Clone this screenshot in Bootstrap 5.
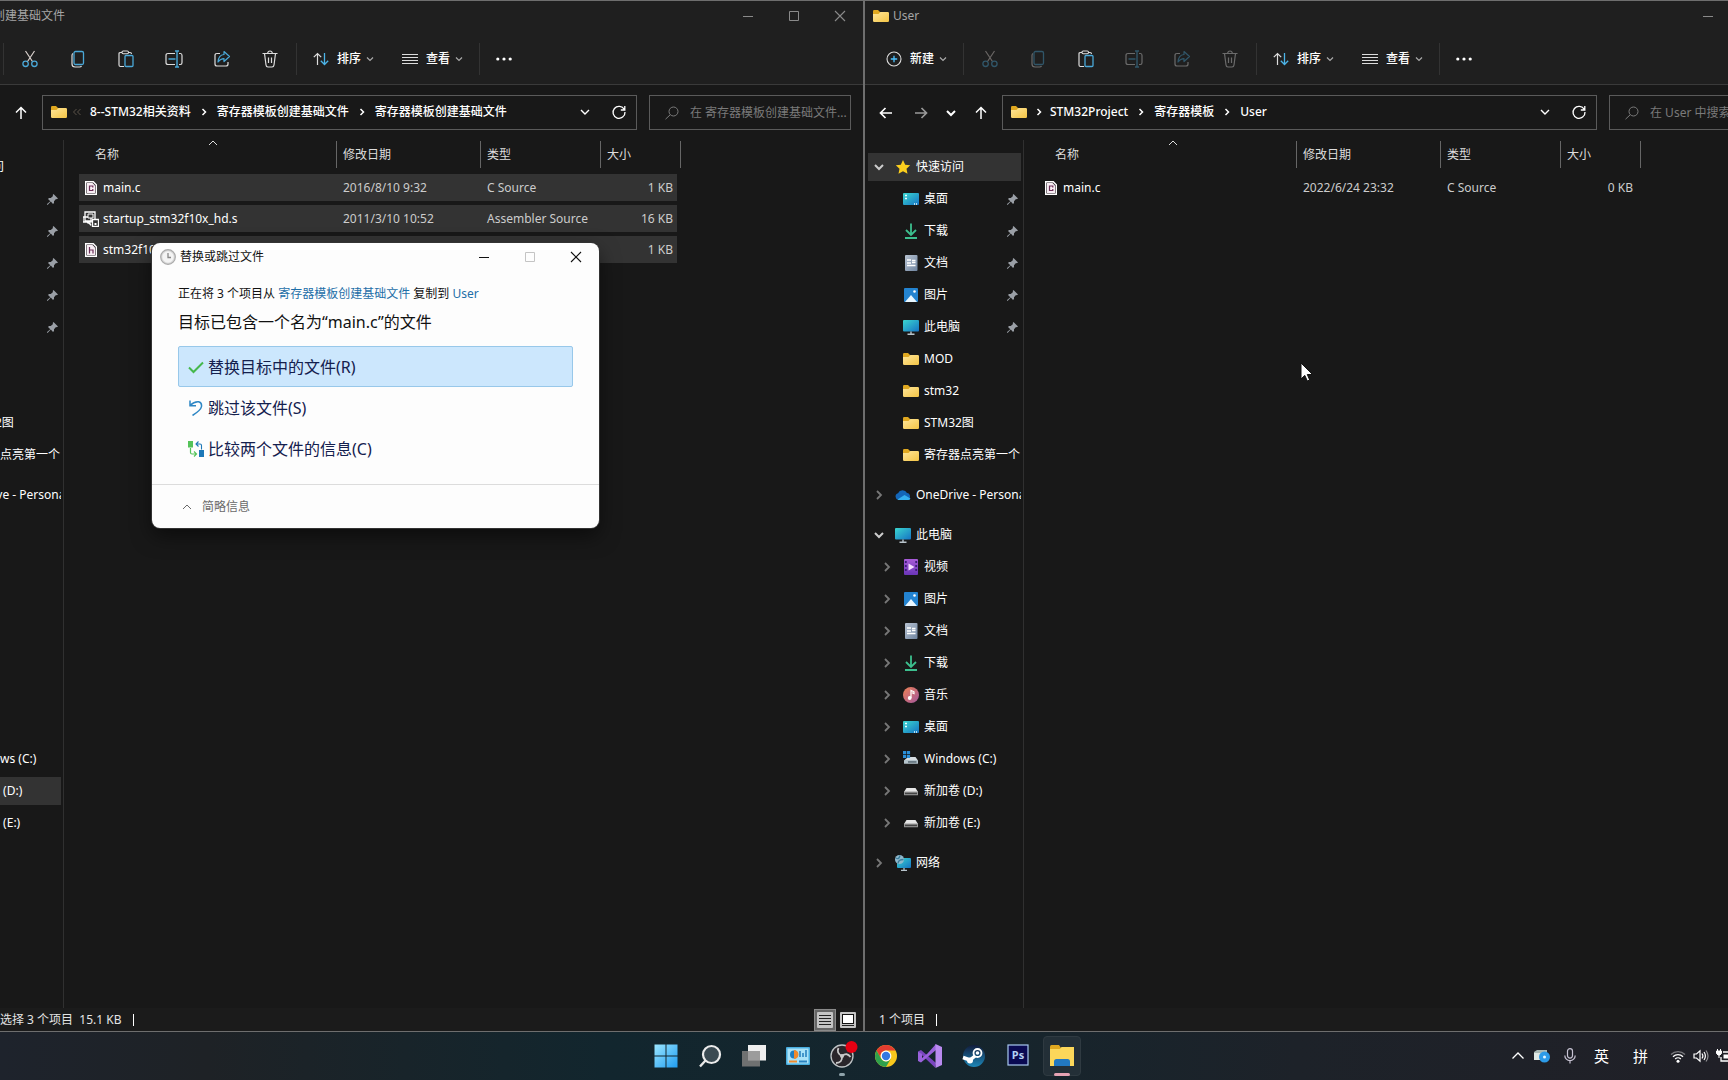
<!DOCTYPE html>
<html lang="zh-CN">
<head>
<meta charset="utf-8">
<meta name="viewport" content="width=device-width, initial-scale=1">
<title>User</title>
<link href="https://cdn.jsdelivr.net/npm/bootstrap@5.3.0/dist/css/bootstrap.min.css" rel="stylesheet">
<style>
body{font-family:"Noto Sans","Noto Sans CJK SC",sans-serif;font-size:12px;line-height:16px;background:#181818;color:#fff}
button,input{font:inherit;color:inherit}
button{background:none;border:0;padding:0}
a{color:inherit;text-decoration:none}
svg{display:block;flex:none}
.ic{width:16px;height:16px}
.cv{width:8px;height:8px}
.pane{width:50%;overflow:hidden;position:relative;border-top:1px solid #6e6e6e;border-bottom:1px solid #6e6e6e}
.pane::after{content:"";position:absolute;top:0;bottom:0;width:1px;background:#6e6e6e}
.pane-l::after{right:0}
.pane-r::after{left:0}
.win{width:calc(100% + 95px)}
.pane-l{background:linear-gradient(#1f1f1f 84px,#181818 84px)}
.pane-l .win{margin-left:-96px}
.titlebar{height:30px;background:#1f1f1f;color:#a5a5a5;padding-left:9px}
.titlebar button{width:46px;height:30px;color:#8a8a8a}
.tools{height:54px;background:#1f1f1f;border-bottom:1px solid #3a3a3a;padding:2px 0 0 22px}
.tools .lab{gap:8px;font-weight:500}
.tools .lab .cv{margin-left:-3px;color:#aaa}
.tools .lab.new{width:61px}
.tools .lab.view{margin-left:28px}
.tools .sq{width:48px;height:32px}
.tools .sq svg{width:18px;height:18px}
.tools .sq:disabled{opacity:.4}
.vsep{width:1px;height:32px;background:#333;margin:0 16px}
.vsep.s1{margin-right:2px}
.vsep.s2{margin-left:2px}
.navrow{padding:10px 12px 0 4px}
.navrow .nb{height:35px;width:34px}
.navrow .nb.bk{width:36px}
.navrow .nb.hs{width:26px}
.navrow .nb:disabled{color:#999}
.abox{height:35px;border:1px solid #5a5a5a;padding:0 0 2px 8px;margin:0 12px 0 4px}
.abox a{white-space:nowrap;font-weight:500}
.abox .arr{width:26px}
.abox .arr.first{width:23px}
.sbox{height:35px;width:202px;border:1px solid #5a5a5a;padding-left:14px;color:#7a7a7a}
.sbox input{background:none;border:0;outline:0;padding:0;margin-left:10px;min-width:0;flex:1}
.sbox input::placeholder{color:#7a7a7a;opacity:1}
.side{width:160px;padding:21px 3px 0 4px;margin:0}
.sidewrap{position:relative}
.sidewrap::after{content:"";position:absolute;right:0;top:10px;bottom:0;width:1px;background:#303030}
.side li{height:28px;margin:2px 0 4px;overflow:hidden;white-space:nowrap;display:flex;align-items:center}
.side li.sub{padding-left:8px}
.side li.top{margin-top:12px}
.side li.cur{background:#333}
.side .tw{width:22px;display:flex;justify-content:center;margin-right:5px;flex:none;color:#777}
.side .tw.open{color:#ccc}
.side a{margin-left:5px}
.side .pin{width:11px;height:11px;margin-left:auto;margin-right:3px;color:#9a9fa6}
.files{width:602px;margin:7px 0 0 15px;border-collapse:separate;border-spacing:0 4px;table-layout:fixed}
.files th{height:29px;padding:0;font-weight:400;vertical-align:top;color:#ddd;position:relative}
.files th div{height:27px;line-height:27px;padding-left:6px;border-right:1px solid #666}
.files th:first-child div{padding-left:16px}
.files th svg{position:absolute;left:50%;top:-1px}
.files td{height:27px;padding:0 0 0 6px;color:#ccc;white-space:nowrap}
.files td:first-child{padding-left:4px;color:#fff}
.files td:last-child{text-align:right;padding-right:4px;border-right:4px solid transparent;background-clip:padding-box}
.files .on td{background-color:#333}
.files .c1{width:258px}.files .c2{width:144px}.files .c3{width:120px}.files .c4{width:80px}
.status{height:23px;background:#1b1b1b;padding-left:15px;padding-right:7px;color:#e4e4e4}
.status i{width:1px;height:12px;background:#fff;margin:0 11px}
.status .vb{width:22px;height:22px;display:flex;align-items:center;justify-content:center}
.status .vb.on{background:#666;outline:1px solid #8a8a8a;outline-offset:-1px}
.status .vb.big{width:16px}
.dlg{position:absolute;left:152px;top:243px;width:447px;background:#fdfdfd;color:#111;border-radius:8px;box-shadow:0 0 0 1px #333,0 8px 20px rgba(0,0,0,.5);overflow:hidden}
.dlg .dt{height:28px;padding-left:8px}
.dlg .dt button{width:46px;height:28px}
.dlg .dt button:disabled{color:#c4c4c4}
.dlg .db{padding:15px 26px 15px}
.dlg .db a{color:#1e6fa8}
.dlg h1{font-size:16px;line-height:24px;font-weight:400;margin:8px 0 12px}
.dlg .opt{height:41px;width:100%;font-size:16px;color:#14204e;border:1px solid transparent;border-radius:2px;padding-left:9px;gap:4px}
.dlg .opt.on{background:#cce7fd;border-color:#98c8ea}
.dlg .df{border-top:1px solid #dcdcdc;height:44px;padding-left:30px;color:#6a6a6a;gap:10px}
.taskbar{height:48px;background:linear-gradient(90deg,#1e232c 0,#1e2226 12%,#12262e 35%,#15252d 55%,#1d2229 75%,#202027 100%);position:relative}
.taskbar .tk{width:44px;height:48px;display:flex;align-items:center;justify-content:center;position:relative}
.taskbar .tk svg{width:24px;height:24px}
.taskbar .tk.act::before{content:"";position:absolute;inset:4px 3px;background:#232f37;border:1px solid #2f3a41;border-radius:4px}
.taskbar .tk.act svg{position:relative}
.tk .dot{position:absolute;bottom:4px;width:6px;height:3px;border-radius:2px;background:#8fa3aa}
.tk.act .dot{width:16px;background:#e6a3b4}
.tray{position:absolute;right:-10px;top:0;height:48px;font-size:15px}
.tray .ime{width:39px}
.tray .mic{margin:0 4px 0 12px}
.tray .sys{margin-left:10px;gap:7px}
.cursor{position:absolute;left:1300px;top:362px;width:14px;height:21px}
</style>
</head>
<body class="vh-100 d-flex flex-column overflow-hidden position-relative">
<svg width="0" height="0" class="position-absolute" aria-hidden="true">
<defs>
<linearGradient id="gf" x1="0" y1="0" x2="1" y2="1"><stop offset="0" stop-color="#ffe69a"/><stop offset="1" stop-color="#f3c445"/></linearGradient>
<linearGradient id="gm" x1="0" y1="0" x2="1" y2="1"><stop offset="0" stop-color="#3ad6cf"/><stop offset="1" stop-color="#1673c4"/></linearGradient>
<linearGradient id="gw" x1="0" y1="0" x2="1" y2="1"><stop offset="0" stop-color="#9be6ff"/><stop offset="1" stop-color="#1f9cf0"/></linearGradient>
<linearGradient id="gd" x1="0" y1="0" x2="1" y2="1"><stop offset="0" stop-color="#b9c4d2"/><stop offset="1" stop-color="#6f84a0"/></linearGradient>
<linearGradient id="gv" x1="0" y1="0" x2="0" y2="1"><stop offset="0" stop-color="#a85bd8"/><stop offset="1" stop-color="#6a35b8"/></linearGradient>
<linearGradient id="gu" x1="0" y1="0" x2="1" y2="1"><stop offset="0" stop-color="#ee8153"/><stop offset="1" stop-color="#a3579f"/></linearGradient>
<linearGradient id="gs" x1="0" y1="0" x2="0" y2="1"><stop offset="0" stop-color="#121c3c"/><stop offset="1" stop-color="#1d87b8"/></linearGradient>
</defs>
<symbol id="folder" viewBox="0 0 16 16"><path d="M0 3.200Q0 2 1.200 2H5l2 2v3H0z" fill="#e0a820"/><path d="M0 6h5.500l1.800-2h7.500Q16 4 16 5.200v7.600Q16 14 14.800 14H1.200Q0 14 0 12.800z" fill="url(#gf)"/></symbol>
<symbol id="down" viewBox="0 0 8 8"><path d="M1 2.500 4 5.500l3-3" fill="none" stroke="currentColor" stroke-width="1.200"/></symbol>
<symbol id="down2" viewBox="0 0 16 16"><path d="M4 6l4 4 4-4" fill="none" stroke="currentColor" stroke-width="1.400"/></symbol>
<symbol id="down3" viewBox="0 0 16 16"><path d="M4 6l4 4 4-4" fill="none" stroke="currentColor" stroke-width="2"/></symbol>
<symbol id="right2" viewBox="0 0 16 16"><path d="M6 4l4 4-4 4" fill="none" stroke="currentColor" stroke-width="1.800"/></symbol>
<symbol id="crumb" viewBox="0 0 8 8"><path d="M2.500 1 5.500 4l-3 3" fill="none" stroke="currentColor" stroke-width="1.500"/></symbol>
<symbol id="up" viewBox="0 0 16 16"><path d="M8 14V2.500M3 7.500l5-5 5 5" fill="none" stroke="currentColor" stroke-width="1.500"/></symbol>
<symbol id="back" viewBox="0 0 16 16"><path d="M14 8H2.500M7.500 3l-5 5 5 5" fill="none" stroke="currentColor" stroke-width="1.700"/></symbol>
<symbol id="fwd" viewBox="0 0 16 16"><path d="M2 8h11.500M8.500 3l5 5-5 5" fill="none" stroke="currentColor" stroke-width="1.700"/></symbol>
<symbol id="refresh" viewBox="0 0 16 16"><path d="M13.300 5.500A6 6 0 1 0 14 8M13.800 2v4H9.800" fill="none" stroke="currentColor" stroke-width="1.300"/></symbol>
<symbol id="mag" viewBox="0 0 16 16"><path d="M6.300 9.700 1.500 14.200" stroke="currentColor"/><circle cx="9.500" cy="6.500" r="4.500" fill="none" stroke="currentColor"/></symbol>
<symbol id="min" viewBox="0 0 12 12"><path d="M1 6.500h10" stroke="currentColor"/></symbol>
<symbol id="max" viewBox="0 0 12 12"><path d="M1.500 1.500h9v9h-9z" fill="none" stroke="currentColor"/></symbol>
<symbol id="x" viewBox="0 0 12 12"><path d="M1 1l10 10M11 1 1 11" stroke="currentColor" stroke-width="1.100"/></symbol>
<symbol id="plus" viewBox="0 0 16 16"><circle cx="8" cy="8" r="7" fill="none" stroke="#ddd" stroke-width="1.100"/><path d="M8 4.800v6.400M4.800 8h6.400" stroke="#4cc2ff" stroke-width="1.300"/></symbol>
<symbol id="cut" viewBox="0 0 18 18"><path d="M4.500 1 11.800 12M13.500 1 6.200 12" stroke="#d8d0cc" stroke-width="1.200"/><g fill="none" stroke="#4aa8d8" stroke-width="1.300"><circle cx="4.600" cy="13.800" r="2.700"/><circle cx="13.400" cy="13.800" r="2.700"/></g></symbol>
<symbol id="copy" viewBox="0 0 18 18"><path d="M4 3.500Q3 4 3 5.500V14q0 3 3 3h4.500q1.500 0 2-1" fill="none" stroke="#ddd" stroke-width="1.200"/><rect x="5" y="1.500" width="9.500" height="13" rx="1.500" fill="none" stroke="#4aa8d8" stroke-width="1.300"/></symbol>
<symbol id="paste" viewBox="0 0 18 18"><path d="M7 16.500H3.500q-1.500 0-1.500-1.500V3.500Q2 2.500 3.500 2.500H5M11 2.500h2q1.500 0 1.500 1.500" fill="none" stroke="#ddd" stroke-width="1.200"/><rect x="5" y="1" width="6.500" height="2.800" rx="1.200" fill="none" stroke="#ddd" stroke-width="1.100"/><rect x="8" y="5.500" width="8" height="11" rx="1" fill="none" stroke="#4aa8d8" stroke-width="1.300"/></symbol>
<symbol id="rename" viewBox="0 0 18 18"><path d="M10 3.500H3Q1 3.500 1 5.500v7q0 2 2 2h7M14 3.500h1.500q1.500 0 1.500 2v7q0 2-1.500 2H14" fill="none" stroke="#ddd" stroke-width="1.200"/><path d="M12 1.200v15.600M10 1h4M10 17h4M3.500 9h7" stroke="#4aa8d8" stroke-width="1.400"/></symbol>
<symbol id="share" viewBox="0 0 18 18"><path d="M7 3.500H4q-2 0-2 2V14q0 2 2 2h9q2 0 2-2v-2" fill="none" stroke="#ddd" stroke-width="1.200"/><path d="M11 1.500 16.500 6.500 11 11.500V8.700Q7.500 8.700 5 12 5.500 5 11 4.500z" fill="none" stroke="#4aa8d8" stroke-width="1.200" stroke-linejoin="round"/></symbol>
<symbol id="trash" viewBox="0 0 18 18"><path d="M1.500 3.500h15M6.500 3.500Q7 1 9 1t2.500 2.500M3.500 3.500 5 15q.2 2 2 2h4q1.800 0 2-2l1.500-11.500M7.500 7.500v5.500M10.500 7.500v5.500" fill="none" stroke="#ddd" stroke-width="1.200"/></symbol>
<symbol id="sort" viewBox="0 0 16 16"><path d="M4.500 14V2.500M.8 6.200l3.700-3.700 3.700 3.700" fill="none" stroke="#ddd" stroke-width="1.200"/><path d="M11.500 2v11.500M7.800 9.800l3.700 3.700 3.700-3.700" fill="none" stroke="#4cb4e8" stroke-width="1.300"/></symbol>
<symbol id="lines" viewBox="0 0 16 16"><path d="M0 3.500h16M0 6.500h16M0 9.500h16M0 12.500h16" stroke="#ddd"/></symbol>
<symbol id="dots" viewBox="0 0 16 16"><g fill="#fff"><circle cx="1.800" cy="8" r="1.600"/><circle cx="8" cy="8" r="1.600"/><circle cx="14.200" cy="8" r="1.600"/></g></symbol>
<symbol id="caret" viewBox="0 0 10 6"><path d="M1 5l4-4 4 4" fill="none" stroke="currentColor"/></symbol>
<symbol id="pin" viewBox="0 0 11 11"><path d="M6.500 0 11 4.500 9.800 5.200 9 5 7 7.200V9L6 10 3.800 7.600 .8 10.800H0V10L3.300 7.200 1 5l1-1h1.800L6 2 5.700 1z" fill="currentColor"/></symbol>
<symbol id="star" viewBox="0 0 16 16"><path d="M8 1l2.200 4.700 5 .6-3.700 3.400 1 5L8 12.200 3.500 14.700l1-5L.8 6.300l5-.6z" fill="#fccf1d"/></symbol>
<symbol id="desk" viewBox="0 0 16 16"><rect y="2" width="16" height="12" rx="1" fill="url(#gm)"/><path d="M2 4.500h2M2 7.500h2M11 13h1M13 13h1" stroke="#e8ffff" stroke-width="1.500"/></symbol>
<symbol id="dl" viewBox="0 0 16 16"><path d="M8 .5v11M3 7l5 5 5-5M2 15h12" fill="none" stroke="#3cbf8e" stroke-width="1.800"/></symbol>
<symbol id="doc" viewBox="0 0 16 16"><rect x="2" width="12.500" height="16" rx="1" fill="url(#gd)"/><path d="M4 5h4M4 8h4M4 10.500h8.500M9 5.500h3.500M9 7.500h3.500" stroke="#fff" stroke-width="1.300"/></symbol>
<symbol id="pic" viewBox="0 0 16 16"><rect x="1" y="1" width="14" height="14" rx="1" fill="#2383d0"/><path d="M2 15l6-7 6 7z" fill="#e9f7ff"/><circle cx="11.500" cy="4.500" r="1.300" fill="#fff"/></symbol>
<symbol id="pc" viewBox="0 0 16 16"><rect y="1" width="16" height="11.500" rx="1" fill="url(#gm)"/><path d="M8 12.500v2.500M4.500 15.200h7" stroke="#b8c4cc" stroke-width="1.400"/></symbol>
<symbol id="cloud" viewBox="0 0 16 16"><path d="M3.500 13A3.500 3.500 0 0 1 3 6.200 5 5 0 0 1 12 6a3.600 3.600 0 0 1 .5 7z" fill="#1466b8"/><path d="M2.500 12.500 9.500 8l6 3.500A2.500 2.500 0 0 1 13 13H3.500z" fill="#35b0f0"/></symbol>
<symbol id="vid" viewBox="0 0 16 16"><rect x="1" width="14" height="16" rx="1" fill="url(#gv)"/><path d="M2.800 2v12M13.200 2v12" stroke="#3b1d78" stroke-width="1.800" stroke-dasharray="2 2"/><path d="M5.500 4.500 11.500 8l-6 3.500z" fill="#f4dcff"/></symbol>
<symbol id="mus" viewBox="0 0 16 16"><circle cx="8" cy="8" r="8" fill="url(#gu)"/><circle cx="6.700" cy="11" r="1.900" fill="#fff"/><path d="M8 11V3.500l3 1.300v1.800L9 5.800" fill="none" stroke="#fff" stroke-width="1.200"/></symbol>
<symbol id="drv" viewBox="0 0 16 16"><path d="M3.500 5h9L15 9H1z" fill="#e6e6e6"/><rect x="1" y="8.500" width="14" height="3.800" rx=".6" fill="#999"/><rect x="2" y="9.700" width="12" height="1.500" fill="#444"/></symbol>
<symbol id="drvc" viewBox="0 0 16 16"><path d="M5 6h7.500L15 9.500H1z" fill="#d6dde2"/><rect x="1" y="9" width="14" height="3.800" rx=".6" fill="#b5c4cc"/><rect x="5" y="10.300" width="8.500" height="1.300" fill="#4b5c66"/><path d="M0 0h3.200v3.200H0zM3.900 0h3.200v3.200H3.900zM0 3.900h3.200v3.200H0zM3.900 3.900h3.200v3.200H3.900z" fill="#2b8fd8"/></symbol>
<symbol id="net" viewBox="0 0 16 16"><rect x="2" y="3" width="14" height="10" rx="1" fill="url(#gm)"/><path d="M9 13v2M6 15.300h6" stroke="#b8c4cc" stroke-width="1.300"/><circle cx="4.500" cy="4.500" r="4.500" fill="#8fb8cc"/><path d="M1 3q3 2 4-2.500M3 8.500q0-4 5.500-4" fill="none" stroke="#3b7d9c" stroke-width="1.300"/></symbol>
<symbol id="fc" viewBox="0 0 16 16"><path d="M2.700 1.700h7.600l3 3v9.600H2.700z" fill="#2a2228" stroke="#fff" stroke-width="1.400"/><path d="M4 3h5.500L12 5.500V13H4z" fill="#f8eef4"/><path d="M9.800 7.500V6H6.500v4.500h3.300V9" fill="none" stroke="#6b2f58" stroke-width="1.200"/></symbol>
<symbol id="fh" viewBox="0 0 16 16"><path d="M2.700 1.700h7.600l3 3v9.600H2.700z" fill="#2a2228" stroke="#fff" stroke-width="1.400"/><path d="M4 3h5.500L12 5.500V13H4z" fill="#f8eef4"/><path d="M6.500 5V11.500M6.500 8h3.500v3.500" fill="none" stroke="#6b2f58" stroke-width="1.200"/></symbol>
<symbol id="fs" viewBox="0 0 16 16"><path d="M2 1h10v9H2zM0 6h8v5H0z" fill="#333" stroke="#fff" stroke-width="1.300"/><path d="M5 3h5v4H5z" fill="#333" stroke="#fff"/><path d="M9.500 8.500h6v7h-6z" fill="#333" stroke="#fff" stroke-width="1.300"/><path d="M11.500 12h2v2h-2z" fill="#fff"/><path d="M4 11.500q3 0 4 3" fill="none" stroke="#fff" stroke-width="1.300"/></symbol>
</svg>

<main class="flex-fill d-flex overflow-hidden">
<section class="pane pane-l d-flex">
<div class="win d-flex flex-column flex-shrink-0">
  <header class="titlebar d-flex align-items-center">
    <svg class="ic"><use href="#folder"/></svg><span class="ps-1">寄存器模板创建基础文件</span>
    <div class="ms-auto d-flex">
      <button aria-label="最小化"><svg class="mx-auto" width="12" height="12"><use href="#min"/></svg></button>
      <button aria-label="最大化"><svg class="mx-auto" width="12" height="12"><use href="#max"/></svg></button>
      <button aria-label="关闭"><svg class="mx-auto" width="12" height="12"><use href="#x"/></svg></button>
    </div>
  </header>
  <div class="tools d-flex align-items-center">
    <button class="lab new" aria-label="新建"></button>
    <span class="vsep s1"></span>
    <button class="sq" aria-label="剪切"><svg class="mx-auto"><use href="#cut"/></svg></button>
    <button class="sq" aria-label="复制"><svg class="mx-auto"><use href="#copy"/></svg></button>
    <button class="sq" aria-label="粘贴"><svg class="mx-auto"><use href="#paste"/></svg></button>
    <button class="sq" aria-label="重命名"><svg class="mx-auto"><use href="#rename"/></svg></button>
    <button class="sq" aria-label="共享"><svg class="mx-auto"><use href="#share"/></svg></button>
    <button class="sq" aria-label="删除"><svg class="mx-auto"><use href="#trash"/></svg></button>
    <span class="vsep s2"></span>
    <button class="lab d-flex align-items-center"><svg class="ic"><use href="#sort"/></svg>排序<svg class="cv"><use href="#down"/></svg></button>
    <button class="lab view d-flex align-items-center"><svg class="ic"><use href="#lines"/></svg>查看<svg class="cv"><use href="#down"/></svg></button>
    <span class="vsep"></span>
    <button aria-label="更多"><svg class="ic"><use href="#dots"/></svg></button>
  </div>
  <div class="navrow d-flex">
    <button class="nb bk" aria-label="后退"><svg class="ic mx-auto"><use href="#back"/></svg></button>
    <button class="nb" aria-label="前进"><svg class="ic mx-auto"><use href="#fwd"/></svg></button>
    <button class="nb hs" aria-label="历史"><svg class="ic mx-auto"><use href="#down3"/></svg></button>
    <button class="nb" aria-label="向上"><svg class="ic mx-auto"><use href="#up"/></svg></button>
    <div class="abox flex-fill d-flex align-items-center">
      <svg class="ic"><use href="#folder"/></svg>
      <svg width="23" height="12" viewBox="0 0 23 12"><path d="M9.500 3 6.500 6l3 3M13.500 3l-3 3 3 3" fill="none" stroke="#5a5248"/></svg>
      <a href="#">8--STM32相关资料</a>
      <span class="arr"><svg class="cv mx-auto"><use href="#crumb"/></svg></span>
      <a href="#">寄存器模板创建基础文件</a>
      <span class="arr"><svg class="cv mx-auto"><use href="#crumb"/></svg></span>
      <a href="#">寄存器模板创建基础文件</a>
      <button class="nb ms-auto" aria-label="展开"><svg class="ic mx-auto"><use href="#down2"/></svg></button>
      <button class="nb" aria-label="刷新"><svg class="ic mx-auto"><use href="#refresh"/></svg></button>
    </div>
    <label class="sbox d-flex align-items-center"><svg class="ic"><use href="#mag"/></svg><input type="text" aria-label="搜索" placeholder="在 寄存器模板创建基础文件..."></label>
  </div>
  <div class="flex-fill d-flex overflow-hidden">
    <nav class="sidewrap">
      <ul class="side list-unstyled">
        <li><span class="tw"></span><svg class="ic"></svg><a href="#">快速访问</a></li>
        <li class="sub"><svg class="pin"><use href="#pin"/></svg></li>
        <li class="sub"><svg class="pin"><use href="#pin"/></svg></li>
        <li class="sub"><svg class="pin"><use href="#pin"/></svg></li>
        <li class="sub"><svg class="pin"><use href="#pin"/></svg></li>
        <li class="sub"><svg class="pin"><use href="#pin"/></svg></li>
        <li class="sub"></li>
        <li class="sub"></li>
        <li class="sub"><span class="tw"></span><svg class="ic"></svg><a href="#">STM32图</a></li>
        <li class="sub"><span class="tw"></span><svg class="ic"></svg><a href="#">寄存器点亮第一个</a></li>
        <li class="top"><span class="tw"></span><svg class="ic"></svg><a href="#">OneDrive - Personal</a></li>
        <li class="top"></li>
        <li class="sub"></li><li class="sub"></li><li class="sub"></li><li class="sub"></li><li class="sub"></li><li class="sub"></li>
        <li class="sub"><span class="tw"></span><svg class="ic"></svg><a href="#">Windows (C:)</a></li>
        <li class="sub cur"><span class="tw"></span><svg class="ic"></svg><a href="#">新加卷 (D:)</a></li>
        <li class="sub"><span class="tw"></span><svg class="ic"></svg><a href="#">新加卷 (E:)</a></li>
      </ul>
    </nav>
    <div class="flex-fill">
      <table class="files">
        <thead><tr><th class="c1"><div>名称</div><svg width="10" height="6"><use href="#caret"/></svg></th><th class="c2"><div>修改日期</div></th><th class="c3"><div>类型</div></th><th class="c4"><div>大小</div></th></tr></thead>
        <tbody>
          <tr class="on"><td><span class="d-flex align-items-center"><svg class="ic me-1"><use href="#fc"/></svg>main.c</span></td><td>2016/8/10 9:32</td><td>C Source</td><td>1 KB</td></tr>
          <tr class="on"><td><span class="d-flex align-items-center"><svg class="ic me-1"><use href="#fs"/></svg>startup_stm32f10x_hd.s</span></td><td>2011/3/10 10:52</td><td>Assembler Source</td><td>16 KB</td></tr>
          <tr class="on"><td><span class="d-flex align-items-center"><svg class="ic me-1"><use href="#fh"/></svg>stm32f10x.h</span></td><td></td><td></td><td>1 KB</td></tr>
        </tbody>
      </table>
    </div>
  </div>
  <footer class="status d-flex align-items-center">
    <span>3 个项目</span><i></i><span>已选择 3 个项目&nbsp; 15.1 KB</span><i></i>
    <div class="ms-auto d-flex gap-1">
      <button class="vb on" aria-label="详细信息"><svg width="16" height="16"><rect width="16" height="16" rx="1" fill="#c4c4c4"/><path d="M2 3.500h12M2 6.500h12M2 9.500h12M2 12.500h12" stroke="#222"/></svg></button>
      <button class="vb big" aria-label="大图标"><svg width="16" height="16"><rect width="16" height="16" rx="1" fill="#c4c4c4"/><rect x="2.500" y="2.500" width="11" height="9" fill="#fff" stroke="#111"/><path d="M2 13.500h12" stroke="#222"/></svg></button>
    </div>
  </footer>
</div>
</section>

<section class="pane pane-r d-flex">
<div class="win d-flex flex-column flex-shrink-0">
  <header class="titlebar d-flex align-items-center">
    <svg class="ic"><use href="#folder"/></svg><span class="ps-1">User</span>
    <div class="ms-auto d-flex">
      <button aria-label="最小化"><svg class="mx-auto" width="12" height="12"><use href="#min"/></svg></button>
      <button aria-label="最大化"><svg class="mx-auto" width="12" height="12"><use href="#max"/></svg></button>
      <button aria-label="关闭"><svg class="mx-auto" width="12" height="12"><use href="#x"/></svg></button>
    </div>
  </header>
  <div class="tools d-flex align-items-center">
    <button class="lab new d-flex align-items-center"><svg class="ic"><use href="#plus"/></svg>新建<svg class="cv"><use href="#down"/></svg></button>
    <span class="vsep s1"></span>
    <button class="sq" disabled aria-label="剪切"><svg class="mx-auto"><use href="#cut"/></svg></button>
    <button class="sq" disabled aria-label="复制"><svg class="mx-auto"><use href="#copy"/></svg></button>
    <button class="sq" aria-label="粘贴"><svg class="mx-auto"><use href="#paste"/></svg></button>
    <button class="sq" disabled aria-label="重命名"><svg class="mx-auto"><use href="#rename"/></svg></button>
    <button class="sq" disabled aria-label="共享"><svg class="mx-auto"><use href="#share"/></svg></button>
    <button class="sq" disabled aria-label="删除"><svg class="mx-auto"><use href="#trash"/></svg></button>
    <span class="vsep s2"></span>
    <button class="lab d-flex align-items-center"><svg class="ic"><use href="#sort"/></svg>排序<svg class="cv"><use href="#down"/></svg></button>
    <button class="lab view d-flex align-items-center"><svg class="ic"><use href="#lines"/></svg>查看<svg class="cv"><use href="#down"/></svg></button>
    <span class="vsep"></span>
    <button aria-label="更多"><svg class="ic"><use href="#dots"/></svg></button>
  </div>
  <div class="navrow d-flex">
    <button class="nb bk" aria-label="后退"><svg class="ic mx-auto"><use href="#back"/></svg></button>
    <button class="nb" aria-label="前进" disabled><svg class="ic mx-auto"><use href="#fwd"/></svg></button>
    <button class="nb hs" aria-label="历史"><svg class="ic mx-auto"><use href="#down3"/></svg></button>
    <button class="nb" aria-label="向上"><svg class="ic mx-auto"><use href="#up"/></svg></button>
    <div class="abox flex-fill d-flex align-items-center">
      <svg class="ic"><use href="#folder"/></svg>
      <span class="arr first"><svg class="cv mx-auto"><use href="#crumb"/></svg></span>
      <a href="#">STM32Project</a>
      <span class="arr"><svg class="cv mx-auto"><use href="#crumb"/></svg></span>
      <a href="#">寄存器模板</a>
      <span class="arr"><svg class="cv mx-auto"><use href="#crumb"/></svg></span>
      <a href="#">User</a>
      <button class="nb ms-auto" aria-label="展开"><svg class="ic mx-auto"><use href="#down2"/></svg></button>
      <button class="nb" aria-label="刷新"><svg class="ic mx-auto"><use href="#refresh"/></svg></button>
    </div>
    <label class="sbox d-flex align-items-center"><svg class="ic"><use href="#mag"/></svg><input type="text" aria-label="搜索" placeholder="在 User 中搜索"></label>
  </div>
  <div class="flex-fill d-flex overflow-hidden">
    <nav class="sidewrap">
      <ul class="side list-unstyled">
        <li class="cur"><span class="tw open"><svg class="ic"><use href="#down3"/></svg></span><svg class="ic"><use href="#star"/></svg><a href="#">快速访问</a></li>
        <li class="sub"><span class="tw"></span><svg class="ic"><use href="#desk"/></svg><a href="#">桌面</a><svg class="pin"><use href="#pin"/></svg></li>
        <li class="sub"><span class="tw"></span><svg class="ic"><use href="#dl"/></svg><a href="#">下载</a><svg class="pin"><use href="#pin"/></svg></li>
        <li class="sub"><span class="tw"></span><svg class="ic"><use href="#doc"/></svg><a href="#">文档</a><svg class="pin"><use href="#pin"/></svg></li>
        <li class="sub"><span class="tw"></span><svg class="ic"><use href="#pic"/></svg><a href="#">图片</a><svg class="pin"><use href="#pin"/></svg></li>
        <li class="sub"><span class="tw"></span><svg class="ic"><use href="#pc"/></svg><a href="#">此电脑</a><svg class="pin"><use href="#pin"/></svg></li>
        <li class="sub"><span class="tw"></span><svg class="ic"><use href="#folder"/></svg><a href="#">MOD</a></li>
        <li class="sub"><span class="tw"></span><svg class="ic"><use href="#folder"/></svg><a href="#">stm32</a></li>
        <li class="sub"><span class="tw"></span><svg class="ic"><use href="#folder"/></svg><a href="#">STM32图</a></li>
        <li class="sub"><span class="tw"></span><svg class="ic"><use href="#folder"/></svg><a href="#">寄存器点亮第一个</a></li>
        <li class="top"><span class="tw"><svg class="ic"><use href="#right2"/></svg></span><svg class="ic"><use href="#cloud"/></svg><a href="#">OneDrive - Personal</a></li>
        <li class="top"><span class="tw open"><svg class="ic"><use href="#down3"/></svg></span><svg class="ic"><use href="#pc"/></svg><a href="#">此电脑</a></li>
        <li class="sub"><span class="tw"><svg class="ic"><use href="#right2"/></svg></span><svg class="ic"><use href="#vid"/></svg><a href="#">视频</a></li>
        <li class="sub"><span class="tw"><svg class="ic"><use href="#right2"/></svg></span><svg class="ic"><use href="#pic"/></svg><a href="#">图片</a></li>
        <li class="sub"><span class="tw"><svg class="ic"><use href="#right2"/></svg></span><svg class="ic"><use href="#doc"/></svg><a href="#">文档</a></li>
        <li class="sub"><span class="tw"><svg class="ic"><use href="#right2"/></svg></span><svg class="ic"><use href="#dl"/></svg><a href="#">下载</a></li>
        <li class="sub"><span class="tw"><svg class="ic"><use href="#right2"/></svg></span><svg class="ic"><use href="#mus"/></svg><a href="#">音乐</a></li>
        <li class="sub"><span class="tw"><svg class="ic"><use href="#right2"/></svg></span><svg class="ic"><use href="#desk"/></svg><a href="#">桌面</a></li>
        <li class="sub"><span class="tw"><svg class="ic"><use href="#right2"/></svg></span><svg class="ic"><use href="#drvc"/></svg><a href="#">Windows (C:)</a></li>
        <li class="sub"><span class="tw"><svg class="ic"><use href="#right2"/></svg></span><svg class="ic"><use href="#drv"/></svg><a href="#">新加卷 (D:)</a></li>
        <li class="sub"><span class="tw"><svg class="ic"><use href="#right2"/></svg></span><svg class="ic"><use href="#drv"/></svg><a href="#">新加卷 (E:)</a></li>
        <li class="top"><span class="tw"><svg class="ic"><use href="#right2"/></svg></span><svg class="ic"><use href="#net"/></svg><a href="#">网络</a></li>
      </ul>
    </nav>
    <div class="flex-fill">
      <table class="files">
        <thead><tr><th class="c1"><div>名称</div><svg width="10" height="6"><use href="#caret"/></svg></th><th class="c2"><div>修改日期</div></th><th class="c3"><div>类型</div></th><th class="c4"><div>大小</div></th></tr></thead>
        <tbody>
          <tr><td><span class="d-flex align-items-center"><svg class="ic me-1"><use href="#fc"/></svg>main.c</span></td><td>2022/6/24 23:32</td><td>C Source</td><td>0 KB</td></tr>
        </tbody>
      </table>
    </div>
  </div>
  <footer class="status d-flex align-items-center"><span>1 个项目</span><i></i></footer>
</div>
</section>
</main>

<footer class="taskbar d-flex justify-content-center flex-shrink-0">
  <button class="tk" aria-label="开始"><svg viewBox="0 0 24 24"><path d="M.5.5h11v11H.5zM12.500.5h11v11h-11zM.5 12.500h11v11H.5zM12.500 12.500h11v11h-11z" fill="url(#gw)"/></svg></button>
  <button class="tk" aria-label="搜索"><svg viewBox="0 0 24 24"><path d="M7.500 16.500 2 22.500" stroke="#e8e8e8" stroke-width="2.400"/><circle cx="13.500" cy="10.500" r="8.500" fill="#3a4a52" stroke="#ececec" stroke-width="2.200"/></svg></button>
  <button class="tk" aria-label="任务视图"><svg viewBox="0 0 24 24"><rect x="6" y="1" width="18" height="15.500" fill="#efefef"/><rect x="0" y="7" width="18" height="15.500" fill="#777" opacity=".92"/><path d="M6 7h12v9.500H6z" fill="#9c9c9c"/></svg></button>
  <button class="tk" aria-label="控制面板"><svg viewBox="0 0 24 24"><rect y="3" width="24" height="18" rx="1" fill="#48aee0"/><rect x="1.500" y="4.500" width="21" height="15" fill="#a9e2f8"/><circle cx="8" cy="10.500" r="4" fill="#1d7fc4"/><path d="M8 10.500V6a4.500 4.500 0 0 1 0 9z" fill="#f08a2c"/><path d="M14 7v6M17 9v4M20 6v7" stroke="#2a82c0" stroke-width="1.600"/><path d="M3 17.500h8" stroke="#f08a2c" stroke-width="2"/><path d="M13 17.500h8" stroke="#2a82c0" stroke-width="2"/></svg></button>
  <button class="tk" aria-label="OBS"><svg viewBox="0 0 24 24" class="overflow-visible"><circle cx="12" cy="12" r="11" fill="#2a262b" stroke="#bfc4c6" stroke-width="1.300"/><path d="M12 12Q6 9 8.500 4M12 12q5-4 8.500 1M12 12q.5 7-6 7" fill="none" stroke="#c8c8c8" stroke-width="1.800"/><circle cx="12" cy="12" r="2" fill="#c8c8c8"/><circle cx="21.500" cy="3" r="6" fill="#e60012"/></svg><span class="dot"></span></button>
  <button class="tk" aria-label="Chrome"><svg viewBox="0 0 24 24"><circle cx="12" cy="12" r="11" fill="#f9c81c"/><path d="M2.500 6.500A11 11 0 0 1 21.500 6.500H12A5.500 5.500 0 0 0 7.200 14.700z" fill="#e23c30"/><path d="M2.500 6.500A11 11 0 0 0 12 23l4.800-8.200A5.500 5.500 0 0 1 7.200 14.700z" fill="#2fa14c"/><circle cx="12" cy="12" r="5.400" fill="#fff"/><circle cx="12" cy="12" r="4.200" fill="#3478e0"/></svg></button>
  <button class="tk" aria-label="Visual Studio"><svg viewBox="0 0 24 24"><path d="M0 7.500 3 6l15 13-1 4.500z" fill="#7a45c0"/><path d="M0 7.500V17l3 1.500L18 6V0L9.500 9.500 4 14V10z" fill="#9a62dc"/><path d="M17.500 0 24 3v18l-6.500 3z" fill="#b98af0"/></svg></button>
  <button class="tk" aria-label="Steam"><svg viewBox="0 0 24 24"><circle cx="12" cy="12" r="11" fill="url(#gs)"/><circle cx="15.500" cy="9" r="4" fill="none" stroke="#fff" stroke-width="1.800"/><circle cx="15.500" cy="9" r="1.800" fill="#fff"/><path d="M1 13.500 8 16l5-4" fill="none" stroke="#fff" stroke-width="3.500"/><circle cx="8" cy="16.500" r="3" fill="#fff"/></svg></button>
  <button class="tk" aria-label="Photoshop"><svg viewBox="0 0 24 24"><rect x="2" y="1" width="20" height="20" fill="#0a0a52" stroke="#a8c8f0" stroke-width="1.200"/><text x="12" y="15" font-size="11" font-weight="700" font-family="Noto Sans,sans-serif" text-anchor="middle" fill="#b4d2f4">Ps</text></svg></button>
  <button class="tk act" aria-label="文件资源管理器"><svg viewBox="0 0 24 24"><path d="M0 2.500Q0 1 1.500 1H9l2 3v4H0z" fill="#e0a820"/><path d="M0 5h10l1.500-2H24v19H0z" fill="#fbd75a"/><path d="M4 22v-4.500Q4 15 6.500 15h11q2.500 0 2.500 2.500V22z" fill="#2278c0"/></svg><span class="dot"></span></button>
  <div class="tray d-flex align-items-center">
    <button aria-label="显示隐藏的图标"><svg class="me-2" width="16" height="16" viewBox="0 0 16 16"><path d="M2.500 10.500 8 5l5.500 5.500" fill="none" stroke="#fff" stroke-width="1.300"/></svg></button>
    <button aria-label="设备"><svg width="16" height="16" viewBox="0 0 16 16"><path d="M0 4l3-2h10v10H0z" fill="#a8b8b4"/><path d="M0 5h9v7H0z" fill="#dfe8e4"/><circle cx="10.500" cy="9" r="5.500" fill="#2c9be8"/><circle cx="10.500" cy="9" r="1.500" fill="#e4f6ff"/></svg></button>
    <button class="mic" aria-label="麦克风"><svg width="16" height="16" viewBox="0 0 16 16"><rect x="5.500" y=".6" width="5" height="9.500" rx="2.500" fill="none" stroke="#c8c4d4" stroke-width="1.200"/><path d="M2.800 7.500a5.200 5.200 0 0 0 10.400 0M8 12.800V15.500" fill="none" stroke="#c8c4d4" stroke-width="1.200"/></svg></button>
    <button class="ime">英</button>
    <button class="ime">拼</button>
    <button class="sys d-flex" aria-label="网络、音量、电池">
      <svg width="16" height="16" viewBox="0 0 16 16"><g fill="none" stroke="#fff" stroke-width="1.300"><path d="M1 6.500a10 10 0 0 1 14 0" opacity=".4"/><path d="M3 8.800a7 7 0 0 1 10 0M5.200 11a4 4 0 0 1 5.600 0"/></g><circle cx="8" cy="13.200" r="1.500" fill="#fff"/></svg>
      <svg width="16" height="16" viewBox="0 0 16 16"><g fill="none" stroke="#fff" stroke-width="1.200"><path d="M1 6h2.500L7 2.800v10.400L3.500 10H1zM9 5.500q1.800 2.500 0 5M11 4q2.800 4 0 8"/><path d="M13 2.500q4 5.500 0 11" opacity=".5"/></g></svg>
      <svg width="22" height="16" viewBox="0 0 22 16"><path d="M7 4h12v9H5V9" fill="none" stroke="#fff" stroke-width="1.300"/><path d="M7.500 6.500h10v4h-10z" fill="#fff"/><path d="M1.500 1v2M4.500 1v2M.5 3h5v2.500L4 7H2L.5 5.500zM3 7v3" stroke="#fff" fill="#fff"/></svg>
    </button>
  </div>
</footer>

<div class="dlg" role="dialog" aria-label="替换或跳过文件">
  <div class="dt d-flex align-items-center">
    <svg width="16" height="16" viewBox="0 0 16 16"><circle cx="8" cy="8" r="7.300" fill="#d8d8d8" stroke="#aaa" stroke-width="1.200"/><circle cx="8" cy="8" r="5.700" fill="#f4f4f4"/><path d="M8 4V8.500h3" fill="none" stroke="#888" stroke-width="1.300"/></svg>
    <span class="ps-1 flex-fill">替换或跳过文件</span>
    <button aria-label="最小化"><svg class="mx-auto" width="12" height="12"><use href="#min"/></svg></button>
    <button aria-label="最大化" disabled><svg class="mx-auto" width="12" height="12"><use href="#max"/></svg></button>
    <button aria-label="关闭"><svg class="mx-auto" width="12" height="12"><use href="#x"/></svg></button>
  </div>
  <div class="db">
    <div>正在将 3 个项目从 <a href="#">寄存器模板创建基础文件</a> 复制到 <a href="#">User</a></div>
    <h1>目标已包含一个名为“main.c”的文件</h1>
    <button class="opt on d-flex align-items-center"><svg class="ic" viewBox="0 0 16 16"><path d="M1 8.500 5.500 13 15 3.500" fill="none" stroke="#45b84c" stroke-width="2"/></svg>替换目标中的文件(R)</button>
    <button class="opt d-flex align-items-center"><svg class="ic" viewBox="0 0 16 16"><path d="M2 .5v5.300h6M2 5.500Q6 1.500 10.500 1.800 14 2.500 13.500 6.500 13 10 4.500 15.500" fill="none" stroke="#2d86c4" stroke-width="1.500"/></svg>跳过该文件(S)</button>
    <button class="opt d-flex align-items-center"><svg class="ic" viewBox="0 0 16 16"><rect width="5" height="6.500" fill="#55c35a"/><rect x="11" y="9" width="5" height="7" fill="#1d78b8"/><path d="M2.500 7v4.500Q2.500 13 4 13h4.500M6 10.500 8.500 13 6 15.500" fill="none" stroke="#55c35a" stroke-width="1.200"/><path d="M13.500 8.500V4.500Q13.500 3 12 3H8M10.500.5 8 3l2.500 2.500" fill="none" stroke="#1d78b8" stroke-width="1.100"/></svg>比较两个文件的信息(C)</button>
  </div>
  <button class="df d-flex align-items-center w-100"><svg width="10" height="6"><use href="#caret"/></svg>简略信息</button>
</div>

<svg class="cursor" viewBox="0 0 14 21"><path d="M1 1v16l3.800-3.600L7.300 19l2.400-1-2.400-5.500h5.200z" fill="#fff" stroke="#111"/></svg>
<script src="https://cdn.jsdelivr.net/npm/bootstrap@5.3.0/dist/js/bootstrap.bundle.min.js"></script>
</body>
</html>
